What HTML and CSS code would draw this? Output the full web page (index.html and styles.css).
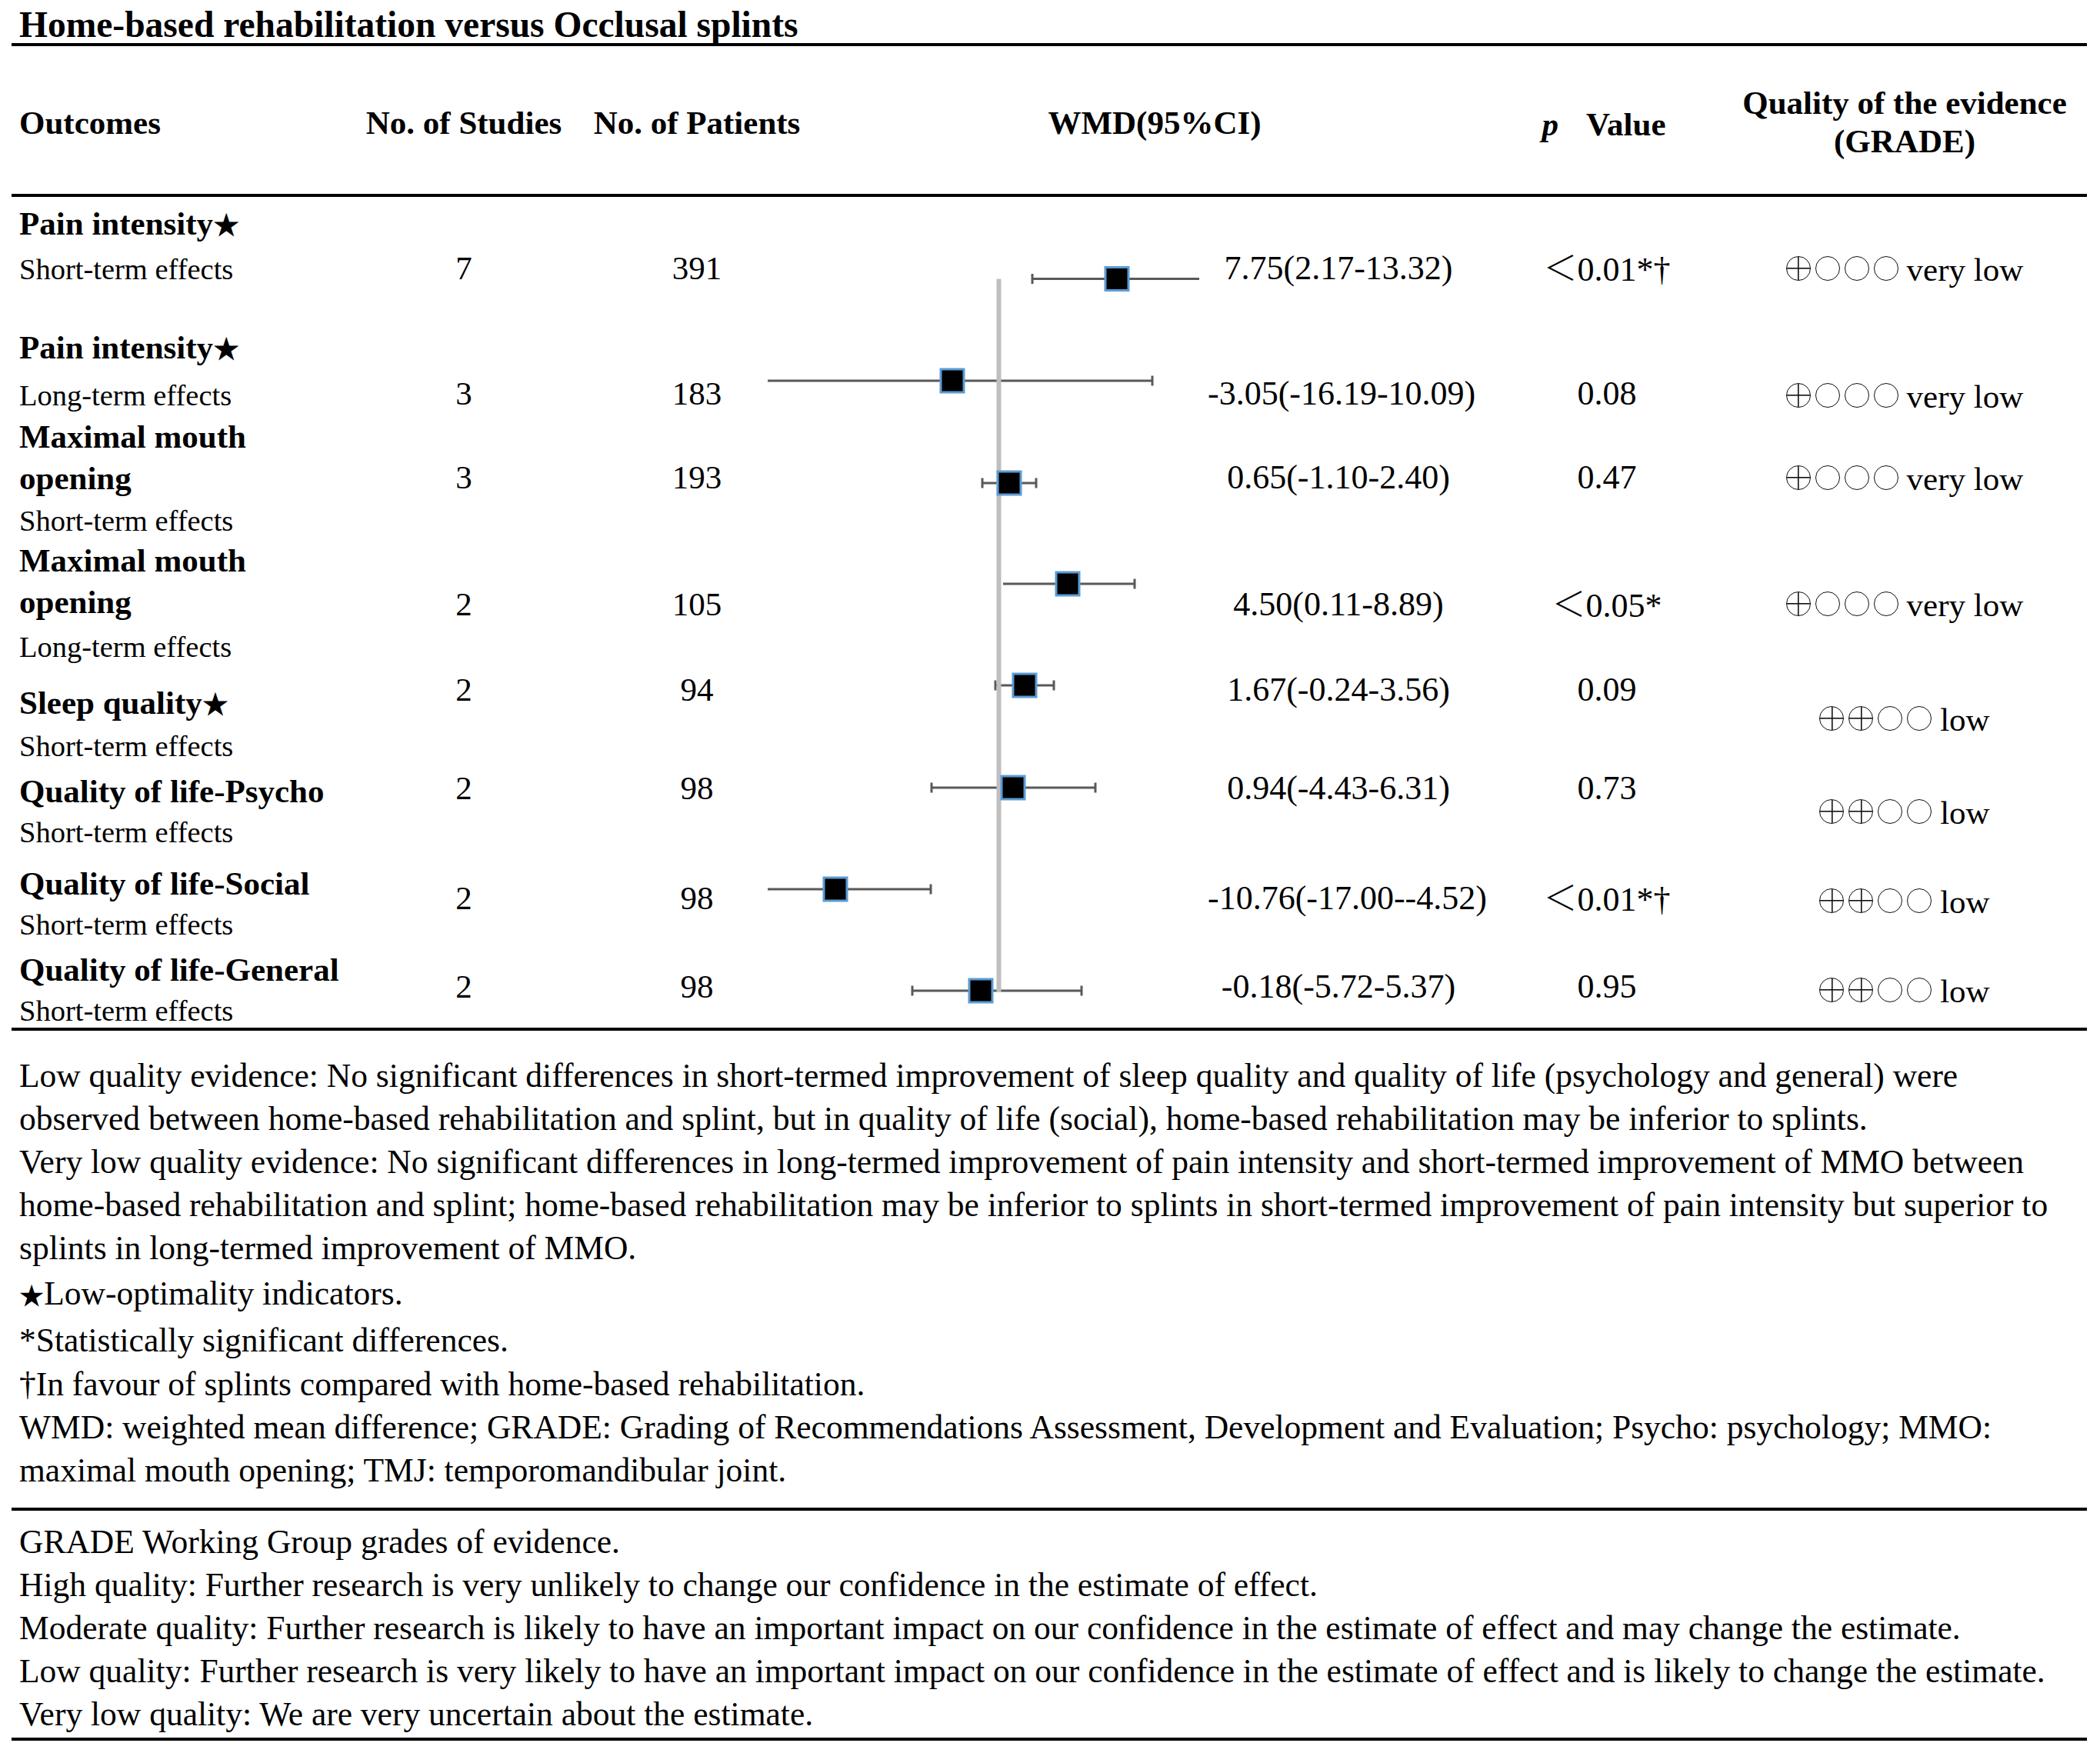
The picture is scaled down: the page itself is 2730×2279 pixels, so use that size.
FILE: index.html
```html
<!DOCTYPE html>
<html lang="en">
<head>
<meta charset="utf-8">
<title>Home-based rehabilitation versus Occlusal splints</title>
<link rel="stylesheet" href="styles.css">
</head>
<body>
<main class="page">
  <h1 class="title">Home-based rehabilitation versus Occlusal splints</h1>

  <section class="table">
    <div class="thead">
      <div class="th c-out">Outcomes</div>
      <div class="th c-stu">No. of Studies</div>
      <div class="th c-pat">No. of Patients</div>
      <div class="th c-wmd-h">WMD(95%CI)</div>
      <div class="th c-p p-head"><em>p</em>Value</div>
      <div class="th c-q q-head">Quality of the evidence<br>(GRADE)</div>
    </div>

    <div class="row r1">
      <div class="outcome"><div class="o-b">Pain intensity<span class="star">★</span></div><div class="o-r">Short-term effects</div></div>
      <div class="num count c-stu">7</div>
      <div class="num count c-pat">391</div>
      <svg class="plot" width="824" height="144" viewBox="0 0 824 144" aria-hidden="true">
        <line class="ci" x1="596" y1="106.5" x2="813" y2="106.5"/>
        <line class="ci" x1="596" y1="100" x2="596" y2="113"/>
        <rect class="ref" x="549.5" y="106.5" width="6" height="37.5"/>
        <rect class="pt" x="691" y="91.5" width="30" height="30"/>
      </svg>
      <div class="num c-wmd">7.75(2.17-13.32)</div>
      <div class="num c-p"><span class="fw">＜</span>0.01*†</div>
      <div class="qual c-q"><span class="grades" role="img" aria-label="⊕○○○"><span class="g plus"></span><span class="g"></span><span class="g"></span><span class="g"></span></span> very low</div>
    </div>

    <div class="row r2">
      <div class="outcome"><div class="o-b">Pain intensity<span class="star">★</span></div><div class="o-r">Long-term effects</div></div>
      <div class="num count c-stu">3</div>
      <div class="num count c-pat">183</div>
      <svg class="plot" width="824" height="140" viewBox="0 0 824 140" aria-hidden="true">
        <line class="ci" x1="252" y1="95" x2="752" y2="95"/>
        <line class="ci" x1="752" y1="88.5" x2="752" y2="101.5"/>
        <rect class="ref" x="549.5" y="0" width="6" height="140"/>
        <rect class="pt" x="477" y="80" width="30" height="30"/>
      </svg>
      <div class="num c-wmd">-3.05(-16.19-10.09)</div>
      <div class="num c-p">0.08</div>
      <div class="qual c-q"><span class="grades" role="img" aria-label="⊕○○○"><span class="g plus"></span><span class="g"></span><span class="g"></span><span class="g"></span></span> very low</div>
    </div>

    <div class="row r3">
      <div class="outcome"><div class="o-b">Maximal mouth<br>opening</div><div class="o-r">Short-term effects</div></div>
      <div class="num count c-stu">3</div>
      <div class="num count c-pat">193</div>
      <svg class="plot" width="824" height="160" viewBox="0 0 824 160" aria-hidden="true">
        <line class="ci" x1="531" y1="88" x2="601" y2="88"/>
        <line class="ci" x1="531" y1="81.5" x2="531" y2="94.5"/>
        <line class="ci" x1="601" y1="81.5" x2="601" y2="94.5"/>
        <rect class="ref" x="549.5" y="0" width="6" height="160"/>
        <rect class="pt" x="551" y="73" width="30" height="30"/>
      </svg>
      <div class="num c-wmd">0.65(-1.10-2.40)</div>
      <div class="num c-p">0.47</div>
      <div class="qual c-q"><span class="grades" role="img" aria-label="⊕○○○"><span class="g plus"></span><span class="g"></span><span class="g"></span><span class="g"></span></span> very low</div>
    </div>

    <div class="row r4">
      <div class="outcome"><div class="o-b">Maximal mouth<br>opening</div><div class="o-r">Long-term effects</div></div>
      <div class="num count c-stu">2</div>
      <div class="num count c-pat">105</div>
      <svg class="plot" width="824" height="165" viewBox="0 0 824 165" aria-hidden="true">
        <line class="ci" x1="558" y1="59" x2="729" y2="59"/>
        <line class="ci" x1="729" y1="52.5" x2="729" y2="65.5"/>
        <rect class="ref" x="549.5" y="0" width="6" height="165"/>
        <rect class="pt" x="627" y="44" width="30" height="30"/>
      </svg>
      <div class="num c-wmd">4.50(0.11-8.89)</div>
      <div class="num c-p"><span class="fw">＜</span>0.05*</div>
      <div class="qual c-q"><span class="grades" role="img" aria-label="⊕○○○"><span class="g plus"></span><span class="g"></span><span class="g"></span><span class="g"></span></span> very low</div>
    </div>

    <div class="row r5">
      <div class="outcome"><div class="o-b">Sleep quality<span class="star">★</span></div><div class="o-r">Short-term effects</div></div>
      <div class="num count c-stu">2</div>
      <div class="num count c-pat">94</div>
      <svg class="plot" width="824" height="130" viewBox="0 0 824 130" aria-hidden="true">
        <line class="ci" x1="548" y1="26" x2="624" y2="26"/>
        <line class="ci" x1="548" y1="19.5" x2="548" y2="32.5"/>
        <line class="ci" x1="624" y1="19.5" x2="624" y2="32.5"/>
        <rect class="ref" x="549.5" y="0" width="6" height="130"/>
        <rect class="pt" x="571" y="11" width="30" height="30"/>
      </svg>
      <div class="num c-wmd">1.67(-0.24-3.56)</div>
      <div class="num c-p">0.09</div>
      <div class="qual c-q"><span class="grades" role="img" aria-label="⊕⊕○○"><span class="g plus"></span><span class="g plus"></span><span class="g"></span><span class="g"></span></span> low</div>
    </div>

    <div class="row r6">
      <div class="outcome"><div class="o-b">Quality of life-Psycho</div><div class="o-r">Short-term effects</div></div>
      <div class="num count c-stu">2</div>
      <div class="num count c-pat">98</div>
      <svg class="plot" width="824" height="115" viewBox="0 0 824 115" aria-hidden="true">
        <line class="ci" x1="465" y1="29" x2="678" y2="29"/>
        <line class="ci" x1="465" y1="22.5" x2="465" y2="35.5"/>
        <line class="ci" x1="678" y1="22.5" x2="678" y2="35.5"/>
        <rect class="ref" x="549.5" y="0" width="6" height="115"/>
        <rect class="pt" x="556" y="14" width="30" height="30"/>
      </svg>
      <div class="num c-wmd">0.94(-4.43-6.31)</div>
      <div class="num c-p">0.73</div>
      <div class="qual c-q"><span class="grades" role="img" aria-label="⊕⊕○○"><span class="g plus"></span><span class="g plus"></span><span class="g"></span><span class="g"></span></span> low</div>
    </div>

    <div class="row r7">
      <div class="outcome"><div class="o-b">Quality of life-Social</div><div class="o-r">Short-term effects</div></div>
      <div class="num count c-stu">2</div>
      <div class="num count c-pat">98</div>
      <svg class="plot" width="824" height="115" viewBox="0 0 824 115" aria-hidden="true">
        <line class="ci" x1="252" y1="46" x2="464" y2="46"/>
        <line class="ci" x1="464" y1="39.5" x2="464" y2="52.5"/>
        <rect class="ref" x="549.5" y="0" width="6" height="115"/>
        <rect class="pt" x="325" y="31" width="30" height="30"/>
      </svg>
      <div class="num c-wmd">-10.76(-17.00--4.52)</div>
      <div class="num c-p"><span class="fw">＜</span>0.01*†</div>
      <div class="qual c-q"><span class="grades" role="img" aria-label="⊕⊕○○"><span class="g plus"></span><span class="g plus"></span><span class="g"></span><span class="g"></span></span> low</div>
    </div>

    <div class="row r8">
      <div class="outcome"><div class="o-b">Quality of life-General</div><div class="o-r">Short-term effects</div></div>
      <div class="num count c-stu">2</div>
      <div class="num count c-pat">98</div>
      <svg class="plot" width="824" height="111" viewBox="0 0 824 111" aria-hidden="true">
        <line class="ci" x1="440" y1="63" x2="660" y2="63"/>
        <line class="ci" x1="440" y1="56.5" x2="440" y2="69.5"/>
        <line class="ci" x1="660" y1="56.5" x2="660" y2="69.5"/>
        <rect class="ref" x="549.5" y="0" width="6" height="65"/>
        <rect class="pt" x="514" y="48" width="30" height="30"/>
      </svg>
      <div class="num c-wmd">-0.18(-5.72-5.37)</div>
      <div class="num c-p">0.95</div>
      <div class="qual c-q"><span class="grades" role="img" aria-label="⊕⊕○○"><span class="g plus"></span><span class="g plus"></span><span class="g"></span><span class="g"></span></span> low</div>
    </div>
  </section>

  <section class="notes">
    <p>Low quality evidence: No significant differences in short-termed improvement of sleep quality and quality of life (psychology and general) were<br>observed between home-based rehabilitation and splint, but in quality of life (social), home-based rehabilitation may be inferior to splints.</p>
    <p>Very low quality evidence: No significant differences in long-termed improvement of pain intensity and short-termed improvement of MMO between<br>home-based rehabilitation and splint; home-based rehabilitation may be inferior to splints in short-termed improvement of pain intensity but superior to<br>splints in long-termed improvement of MMO.</p>
    <p class="n-star"><span class="star-sm">★</span>Low-optimality indicators.</p>
    <p class="n-ast">*Statistically significant differences.</p>
    <p class="n-dag">†In favour of splints compared with home-based rehabilitation.</p>
    <p>WMD: weighted mean difference; GRADE: Grading of Recommendations Assessment, Development and Evaluation; Psycho: psychology; MMO:<br>maximal mouth opening; TMJ: temporomandibular joint.</p>
  </section>

  <section class="grade">
    <p>GRADE Working Group grades of evidence.</p>
    <p>High quality: Further research is very unlikely to change our confidence in the estimate of effect.</p>
    <p>Moderate quality: Further research is likely to have an important impact on our confidence in the estimate of effect and may change the estimate.</p>
    <p>Low quality: Further research is very likely to have an important impact on our confidence in the estimate of effect and is likely to change the estimate.</p>
    <p>Very low quality: We are very uncertain about the estimate.</p>
  </section>
</main>
</body>
</html>
```

FILE: styles.css
```css
* { box-sizing: border-box; }

html, body {
  margin: 0;
  padding: 0;
  background: #ffffff;
}

body {
  font-family: "Liberation Serif", "Times New Roman", serif;
  color: #000000;
}

.page {
  width: 2698px;
  margin-left: 15px;
}

/* Title */
.title {
  margin: 0;
  height: 60px;
  padding: 8px 0 0 10px;
  font-size: 47.5px;
  line-height: 48px;
  font-weight: bold;
  white-space: nowrap;
  border-bottom: 4px solid #000;
}

/* Table */
.table {
  border-bottom: 4px solid #000;
}

/* Shared column grid */
.thead,
.row {
  display: grid;
  grid-template-columns: 445px 286px 320px 504px 340px 350px 432px;
}

/* Header */
.thead {
  height: 196px;
  border-bottom: 4px solid #000;
}

.th {
  padding-top: 75px;
  font-size: 43px;
  line-height: 50px;
  font-weight: bold;
  text-align: center;
  white-space: nowrap;
}

.th.c-out {
  text-align: left;
  padding-left: 10px;
}

.c-out { grid-column: 1; }
.c-stu { grid-column: 2; }
.c-pat { grid-column: 3; }
.c-wmd-h { grid-column: 4 / 6; padding-left: 26px; }
.c-wmd { grid-column: 5; }
.c-p { grid-column: 6; }
.c-q { grid-column: 7; }

.p-head { padding-top: 77px; }
.p-head em {
  font-style: italic;
  margin-right: 36px;
}

.q-head { padding-top: 49px; }

/* Body rows */
.row {
  grid-template-rows: minmax(0, 1fr);
}

.row > * { grid-row: 1; }

.r1 { height: 144px; --ot: 7.5px;  --og: 6.3px; --vt: 68px; --qt: 69.5px; }
.r2 { height: 140px; --ot: 24.5px; --og: 9.3px; --vt: 87px; --qt: 90.5px; }
.r3 { height: 160px; --ot: 0.5px;  --og: 2.3px; --vt: 56px; --qt: 57.5px; }
.r4 { height: 165px; --ot: 1.5px;  --og: 5.3px; --vt: 61px; --qt: 61.5px; }
.r5 { height: 130px; --ot: 21.5px; --og: 3.3px; --vt: 7px;  --qt: 45.5px; }
.r6 { height: 115px; --ot: 6.5px;  --og: 0px;   --vt: 5px;  --qt: 36.5px; }
.r7 { height: 115px; --ot: 11.5px; --og: 0px;   --vt: 33px; --qt: 37.5px; }
.r8 { height: 111px; --ot: 8.5px;  --og: 0px;   --vt: 33px; --qt: 38.5px; }

.outcome {
  grid-column: 1;
  padding-left: 10px;
  padding-top: var(--ot);
  white-space: nowrap;
}

.o-b {
  font-size: 43px;
  line-height: 54px;
  font-weight: bold;
}

.o-r {
  margin-top: var(--og);
  font-size: 38.5px;
  line-height: 52px;
}

.star {
  font-family: "Noto Sans CJK SC", "DejaVu Sans", sans-serif;
  font-size: 0.8em;
  line-height: 1;
}

.num {
  padding-top: var(--vt);
  font-size: 44px;
  line-height: 50px;
  text-align: center;
  white-space: nowrap;
}

.num.count { font-size: 43px; }
.num.c-p { padding-left: 8px; }

.fw {
  font-family: "Noto Sans CJK SC", sans-serif;
  line-height: 1;
  font-weight: 300;
}

/* Forest plot */
.plot {
  grid-column: 3 / 5;
  display: block;
  align-self: start;
}

.ci {
  stroke: #595959;
  stroke-width: 3;
}

.ref {
  fill: #bfbfbf;
}

.pt {
  fill: #000000;
  stroke: #5b9bd5;
  stroke-width: 3;
}

/* GRADE symbols */
.qual {
  padding-top: var(--qt);
  font-size: 43px;
  line-height: 50px;
  text-align: center;
  white-space: nowrap;
}

.grades { display: inline; }

.g {
  display: inline-block;
  width: 32px;
  height: 32px;
  margin-right: 6px;
  border: 1.6px solid #111;
  border-radius: 50%;
  vertical-align: baseline;
}

.g:last-child { margin-right: 0; }

.g.plus {
  background:
    linear-gradient(#111, #111) center / 1.6px 100% no-repeat,
    linear-gradient(#111, #111) center / 100% 1.6px no-repeat;
}

/* Footnotes */
.notes {
  padding: 29.5px 0 0 10px;
  font-size: 43.5px;
  line-height: 56px;
}

.notes p,
.grade p {
  margin: 0;
  white-space: nowrap;
}

.n-star { margin-top: 3px !important; }
.n-ast { margin-top: 5px !important; }
.n-dag { margin-top: 1px !important; }

.star-sm {
  font-family: "Noto Sans CJK SC", "DejaVu Sans", sans-serif;
  font-size: 0.74em;
  line-height: 1;
}

.grade {
  margin-top: 21.5px;
  padding: 11.5px 0 3.5px 10px;
  border-top: 4px solid #000;
  border-bottom: 4px solid #000;
  font-size: 43.5px;
  line-height: 56px;
}
```
